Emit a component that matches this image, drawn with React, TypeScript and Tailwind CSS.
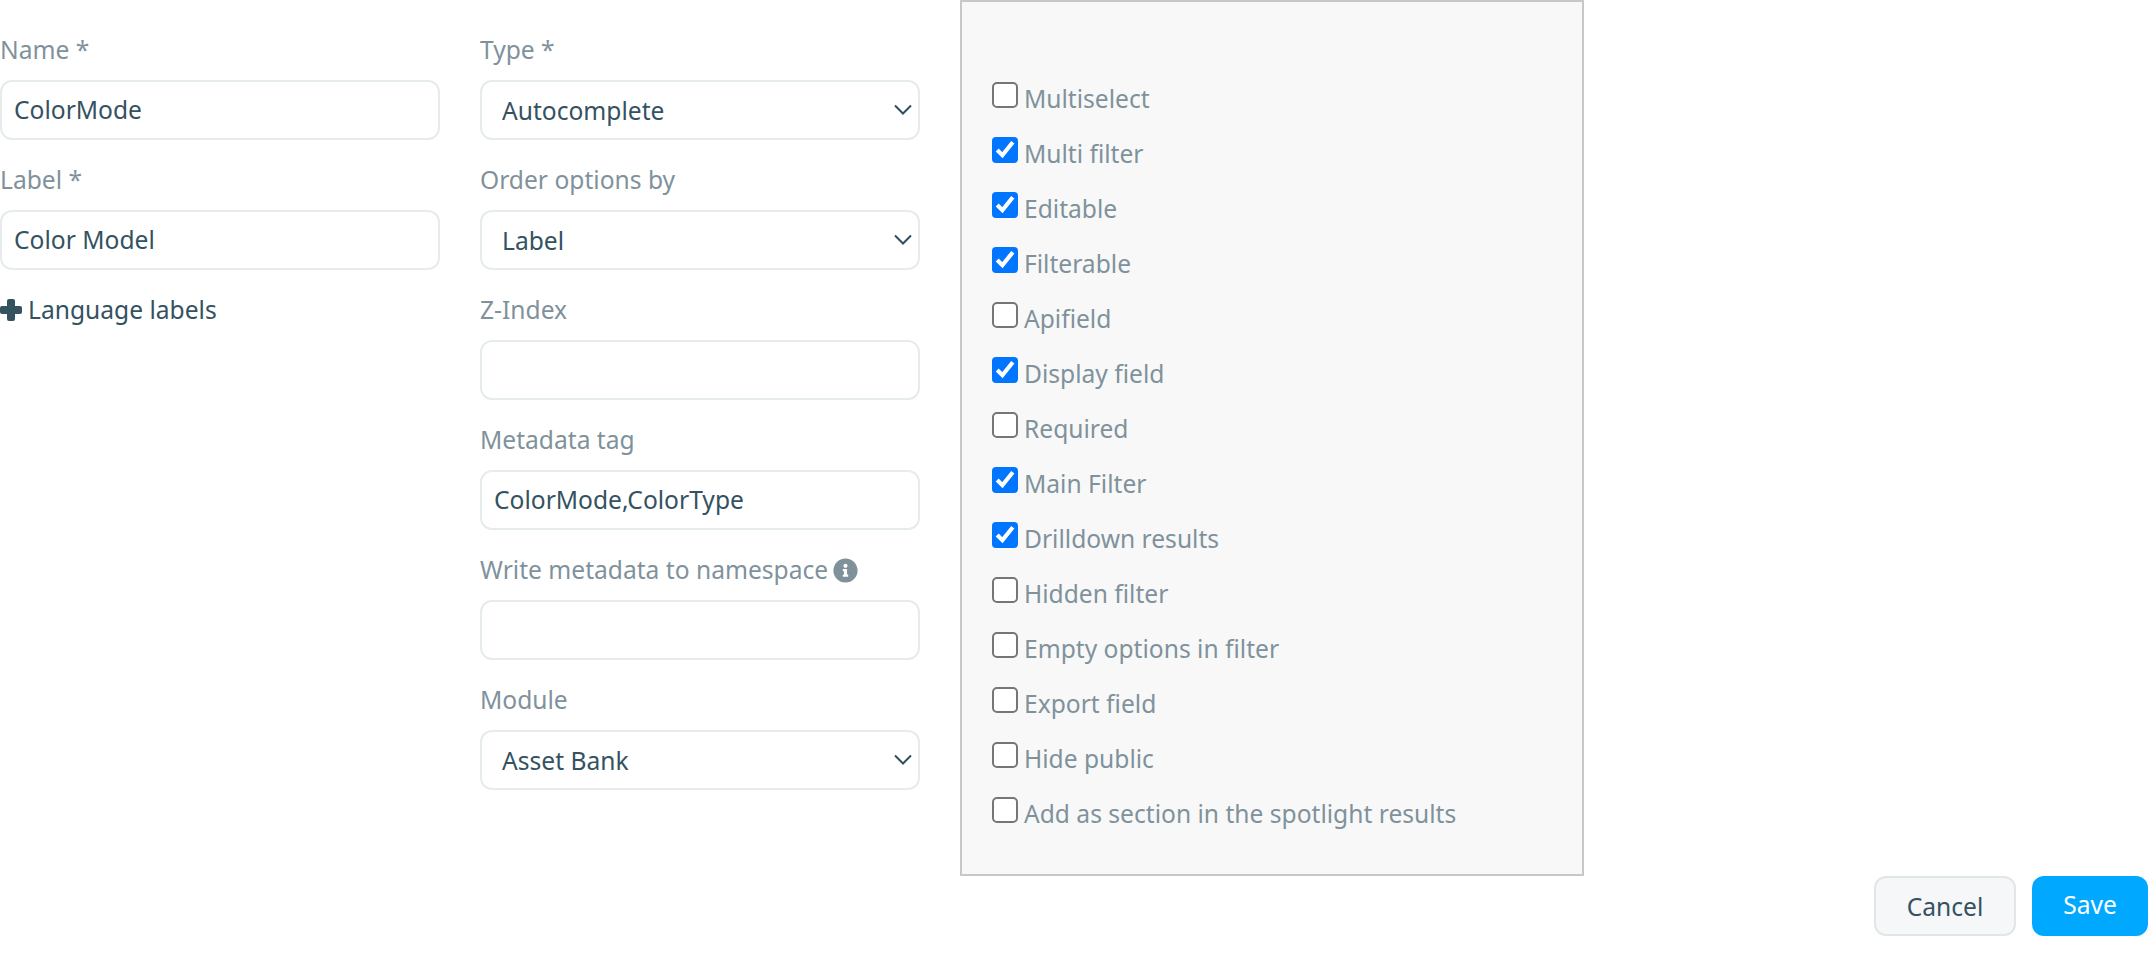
import React from "react";
import { FaInfoCircle } from "react-icons/fa";

const font = "font-['Noto_Sans',sans-serif]";

function Label({ children }: { children: React.ReactNode }) {
  return (
    <label className="flex h-[60px] items-center gap-[5px] pt-[1px] text-[24.6px] leading-none text-[#7f929c]">{children}</label>
  );
}

function TextField({ label, value }: { label: React.ReactNode; value?: string }) {
  return (
    <div className="mb-[10px]">
      <Label>{label}</Label>
      <input
        readOnly
        value={value ?? ""}
        className="block h-[60px] w-full rounded-[12px] border-2 border-[#e6ebeb] bg-white px-[12px] pb-[2px] text-[24.6px] text-[#34525f] outline-none"
      />
    </div>
  );
}

function SelectField({ label, value }: { label: string; value: string }) {
  return (
    <div className="mb-[10px]">
      <Label>{label}</Label>
      <div className="relative">
        <select
          defaultValue={value}
          className="block h-[60px] w-full appearance-none rounded-[12px] border-2 border-[#e6ebeb] bg-white pl-[20px] pt-[2px] text-[24.6px] text-[#34525f] outline-none"
        >
          <option>{value}</option>
        </select>
        <svg
          className="pointer-events-none absolute right-[8px] top-[24px]"
          width="18"
          height="12"
          viewBox="0 0 18 12"
          fill="none"
          stroke="#2f4e5f"
          strokeWidth="2"
        >
          <path d="M1 1.5 9 9.5 17 1.5" />
        </svg>
      </div>
    </div>
  );
}

const options: [string, boolean][] = [
  ["Multiselect", false],
  ["Multi filter", true],
  ["Editable", true],
  ["Filterable", true],
  ["Apifield", false],
  ["Display field", true],
  ["Required", false],
  ["Main Filter", true],
  ["Drilldown results", true],
  ["Hidden filter", false],
  ["Empty options in filter", false],
  ["Export field", false],
  ["Hide public", false],
  ["Add as section in the spotlight results", false],
];

export default function App() {
  return (
    <div className={`w-[2148px] bg-white ${font}`}>
      <div className="flex items-start">
        <div className="w-[440px] pt-[20px]">
          <TextField label="Name *" value="ColorMode" />
          <TextField label="Label *" value="Color Model" />
          <div className="flex h-[60px] items-center gap-[6px] text-[24.6px] text-[#34525f]">
            <svg width="22" height="22" viewBox="0 0 22 22" fill="currentColor">
              <rect x="7" y="0" width="8" height="22" rx="2" />
              <rect x="0" y="7" width="22" height="8" rx="2" />
            </svg>
            <span>Language labels</span>
          </div>
        </div>
        <div className="ml-[40px] w-[440px] pt-[20px]">
          <SelectField label="Type *" value="Autocomplete" />
          <SelectField label="Order options by" value="Label" />
          <TextField label="Z-Index" />
          <TextField label="Metadata tag" value="ColorMode,ColorType" />
          <TextField
            label={
              <>
                <span>Write metadata to namespace</span>
                <FaInfoCircle className="h-[25px] w-[25px] text-[#7f929c]" />
              </>
            }
          />
          <SelectField label="Module" value="Asset Bank" />
        </div>
        <div className="ml-[40px] h-[876px] w-[624px] border-2 border-[#c8c8c8] bg-[#f8f8f8] pl-[30px] pt-[70px]">
          {options.map(([name, checked]) => (
            <label key={name} className="flex h-[55px] items-center gap-[6px] text-[24.6px] text-[#7f929c]">
              <input type="checkbox" defaultChecked={checked} className="m-0 h-[13px] w-[13px] -translate-y-[2.5px] [zoom:2]" />
              <span>{name}</span>
            </label>
          ))}
        </div>
      </div>
      <div className="flex justify-end gap-[16px]">
        <button className="h-[60px] w-[142px] rounded-[12px] border-2 border-[#e1e6e8] bg-[#f5f7f9] pt-[2px] text-[24.6px] text-[#34525f]">
          Cancel
        </button>
        <button className="h-[60px] w-[116px] rounded-[12px] bg-[#00a8ff] pb-[2px] text-[24.6px] text-white">Save</button>
      </div>
    </div>
  );
}
